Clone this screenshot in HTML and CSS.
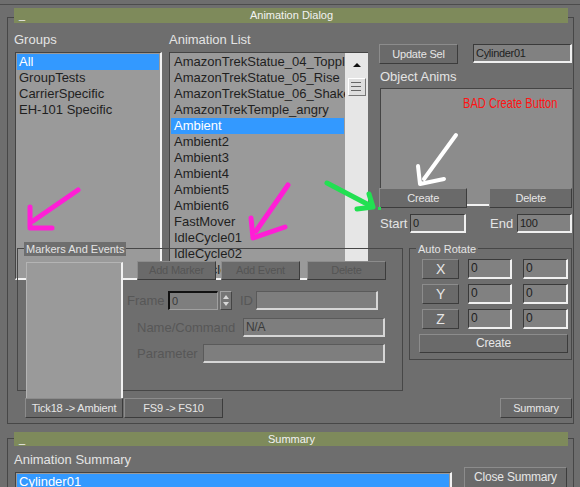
FILE: index.html
```html
<!doctype html>
<html>
<head>
    <title>Animation Dialog</title>
    <link rel="stylesheet" href="styles.css">
</head>
<body>
<div class="window">
    <div class="panel">
        <div class="rollout main-rollout">
            <div class="rollout-head"><span class="collapse">_</span><span class="head-title">Animation Dialog</span></div>
            <div class="rollout-body">
                <div class="top-row">
                    <div class="col-groups">
                        <div class="label">Groups</div>
                        <ul class="list groups-list">
                            <li class="sel">All</li>
                            <li>GroupTests</li>
                            <li>CarrierSpecific</li>
                            <li>EH-101 Specific</li>
                        </ul>
                    </div>
                    <div class="col-anims">
                        <div class="label">Animation List</div>
                        <div class="list anim-list">
                            <ul class="anim-rows">
                                <li>AmazonTrekStatue_04_Topple</li>
                                <li>AmazonTrekStatue_05_Rise</li>
                                <li>AmazonTrekStatue_06_Shake</li>
                                <li>AmazonTrekTemple_angry</li>
                                <li class="sel">Ambient</li>
                                <li>Ambient2</li>
                                <li>Ambient3</li>
                                <li>Ambient4</li>
                                <li>Ambient5</li>
                                <li>Ambient6</li>
                                <li>FastMover</li>
                                <li>IdleCycle01</li>
                                <li>IdleCycle02</li>
                                <li>IdleCycle03</li>
                                <li>IdleCycle04</li>
                            </ul>
                            <div class="scrollbar"><span class="arrow-up"></span><span class="thumb"></span></div>
                        </div>
                    </div>
                    <div class="col-object">
                        <div class="sel-row">
                            <div class="btn btn-update">Update Sel</div>
                            <div class="field name-field">Cylinder01</div>
                        </div>
                        <div class="label obj-label">Object Anims</div>
                        <div class="obj-list"><span class="bad">BAD Create Button</span></div>
                        <div class="obj-buttons">
                            <div class="btn btn-create">Create</div>
                            <div class="btn btn-delete">Delete</div>
                        </div>
                        <div class="range-row">
                            <span class="range-label start-label">Start</span>
                            <div class="field start-field">0</div>
                            <span class="range-label end-label">End</span>
                            <div class="field end-field">100</div>
                        </div>
                    </div>
                </div>
                <div class="mid-row">
                    <div class="group markers">
                        <div class="group-title">Markers And Events</div>
                        <div class="markers-body">
                            <div class="mk-list"></div>
                            <div class="mk-form">
                                <div class="mk-buttons">
                                    <div class="btn off mk-btn">Add Marker</div>
                                    <div class="btn off mk-btn add-event">Add Event</div>
                                    <div class="btn off mk-btn mk-delete">Delete</div>
                                </div>
                                <div class="frame-row">
                                    <span class="off-label frame-label">Frame</span>
                                    <div class="field off-field frame-field">0</div>
                                    <div class="spin"><i class="spin-up"></i><i class="spin-down"></i></div>
                                    <span class="off-label id-label">ID</span>
                                    <div class="field off-field id-field"></div>
                                </div>
                                <div class="form-row name-row">
                                    <span class="off-label name-label">Name/Command</span>
                                    <div class="field off-field name-cmd">N/A</div>
                                </div>
                                <div class="form-row param-row">
                                    <span class="off-label param-label">Parameter</span>
                                    <div class="field off-field param-field"></div>
                                </div>
                            </div>
                        </div>
                    </div>
                    <div class="group autorot">
                        <div class="group-title">Auto Rotate</div>
                        <div class="ar-row first">
                            <div class="btn axis">X</div>
                            <div class="field ar-a">0</div>
                            <div class="field ar-b">0</div>
                        </div>
                        <div class="ar-row">
                            <div class="btn axis">Y</div>
                            <div class="field ar-a">0</div>
                            <div class="field ar-b">0</div>
                        </div>
                        <div class="ar-row">
                            <div class="btn axis">Z</div>
                            <div class="field ar-a">0</div>
                            <div class="field ar-b">0</div>
                        </div>
                        <div class="btn ar-create">Create</div>
                    </div>
                </div>
                <div class="bottom-row">
                    <div class="btn btn-tick">Tick18 -&gt; Ambient</div>
                    <div class="btn btn-fs">FS9 -&gt; FS10</div>
                    <div class="btn btn-summary">Summary</div>
                </div>
            </div>
        </div>
        <div class="rollout summary-rollout">
            <div class="rollout-head small-head"><span class="collapse">_</span><span class="head-title">Summary</span></div>
            <div class="summary-body">
                <div class="label">Animation Summary</div>
                <div class="summary-row">
                    <ul class="list summary-list">
                        <li class="sel">Cylinder01</li>
                    </ul>
                    <div class="btn btn-close">Close Summary</div>
                </div>
            </div>
        </div>
    </div>
    <!-- hand drawn markup arrows over the dialog -->
    <svg class="marks" width="580" height="487" viewBox="0 0 580 487">
        <g fill="none" stroke-linecap="round" stroke-linejoin="round" stroke-width="5">
            <g stroke="#ff1ed6">
                <path d="M78 190 L33 221"/>
                <path d="M30 207 L30 228 L52 228"/>
                <path d="M288 185 L256 231"/>
                <path d="M251 218 L253 238 L285 227"/>
            </g>
            <g stroke="#ffffff" stroke-width="4">
                <path d="M456 135 L424 179"/>
                <path d="M418 166 L420 184 L444 179"/>
            </g>
            <g stroke="#22e052">
                <path d="M327 183 L369 205"/>
                <path d="M369 194 L373 207 L357 209"/>
            </g>
        </g>
        <rect x="378" y="207" width="3" height="3" fill="#22e052"/>
    </svg>
</div>
</body>
</html>
```

FILE: styles.css
```css
* {
    box-sizing: border-box;
}
html, body {
    margin: 0;
}
body {
    background: #6e6e6e;
    font-family: "Liberation Sans", Arial, sans-serif;
    font-size: 13px;
    color: #e4e4e4;
}
ul {
    margin: 0;
    padding: 0;
    list-style: none;
}
.window {
    position: relative;
    width: 580px;
    height: 487px;
    overflow: hidden;
    padding-top: 4px;
}
.panel {
    border-top: 1px solid #4c4c4c;
}

/* Rollouts */
.rollout {
    margin: 12px 0 0 7px;
    width: 567px;
    height: 407px;
    border: 1px solid #474747;
}
.rollout-head {
    display: flex;
    margin: -10px 0 0 6px;
    width: 554px;
    height: 15px;
    background: #7e8a5b;
    color: #f2f2f2;
    font-size: 11px;
    line-height: 15px;
}
.collapse {
    width: 0;
    margin-left: 5px;
}
.head-title {
    flex: 1;
    text-align: center;
    padding-right: 4px;
}
.rollout-body {
    padding: 9px 0 0 6px;
}
.label {
    height: 16px;
    line-height: 16px;
    white-space: nowrap;
}

/* Top row: groups, animation list, object anims */
.top-row {
    display: flex;
    align-items: flex-start;
    height: 216px;
}
.col-groups {
    width: 148px;
}
.list {
    margin-top: 4px;
    height: 228px;
    background: #9a9a9a;
    border-style: solid;
    border-width: 1px 2px 2px 1px;
    border-color: #444 #f2f2f2 #f2f2f2 #444;
    padding: 1px;
    color: #1f1f1f;
    overflow: hidden;
}
.list li {
    height: 16px;
    line-height: 16px;
    padding-left: 2px;
    white-space: nowrap;
}
.list li.sel {
    background: #3399ff;
    color: #fff;
}
.groups-list {
    margin-left: 1px;
}
.col-anims {
    width: 199px;
    margin-left: 7px;
}
.anim-list {
    display: flex;
    padding: 0;
    border-right-width: 0;
}
.anim-rows {
    flex: 1;
    padding: 1px;
    overflow: hidden;
}
.anim-rows li {
    padding-left: 3px;
}
.scrollbar {
    width: 23px;
    background: #e6e6e6;
    display: flex;
    flex-direction: column;
    align-items: center;
    padding-top: 10px;
}
.arrow-up {
    width: 0;
    height: 0;
    border-left: 4px solid transparent;
    border-right: 4px solid transparent;
    border-bottom: 4px solid #111;
}
.thumb {
    margin-top: 11px;
    width: 18px;
    height: 18px;
    border: 1px solid;
    border-color: #fff #777 #777 #fff;
    background:
        linear-gradient(#666, #666) 2px 3px / 10px 1px no-repeat,
        linear-gradient(#666, #666) 2px 7px / 10px 1px no-repeat,
        linear-gradient(#666, #666) 2px 11px / 10px 1px no-repeat,
        #dedede;
}
.col-object {
    width: 193px;
    margin-left: 11px;
}
.sel-row {
    display: flex;
    margin-top: 12px;
    height: 20px;
}
.btn-update {
    width: 79px;
}
.name-field {
    flex: 1;
    margin-left: 15px;
}
.obj-label {
    margin: 5px 0 0 1px;
}
.obj-list {
    margin: 3px 0 0 1px;
    height: 118px;
    background: #8c8c8c;
    border-style: solid;
    border-width: 1px 0 2px 1px;
    border-color: #444 transparent #f2f2f2 #444;
    padding: 6px 0 0 82px;
}
.bad {
    display: inline-block;
    color: #ff1414;
    font-family: "Liberation Sans Narrow", "Liberation Sans", sans-serif;
    font-size: 15px;
    line-height: 16px;
    white-space: nowrap;
    transform: scaleX(0.74);
    transform-origin: left center;
}
.obj-buttons {
    display: flex;
    margin-top: -18px;
}
.btn-create {
    width: 89px;
}
.btn-delete {
    width: 83px;
    margin-left: 22px;
}
.range-row {
    display: flex;
    align-items: center;
    margin-top: 6px;
    height: 19px;
}
.range-label {
    white-space: nowrap;
}
.start-label {
    width: 31px;
    padding-left: 1px;
}
.start-field {
    width: 56px;
}
.end-label {
    width: 27px;
    margin-left: 24px;
}
.end-field {
    flex: 1;
}

/* Buttons and fields */
.btn {
    height: 20px;
    background: #6a6a6a;
    border: 1px solid;
    border-color: #8c8c8c #3c3c3c #3c3c3c #8c8c8c;
    color: #e6e6e6;
    font-size: 11px;
    letter-spacing: -0.2px;
    line-height: 18px;
    text-align: center;
    white-space: nowrap;
}
.btn.off {
    color: #555;
}
.field {
    height: 19px;
    background: #818181;
    border-style: solid;
    border-width: 1px 2px 2px 1px;
    border-color: #3a3a3a #f0f0f0 #f0f0f0 #3a3a3a;
    color: #1e1e1e;
    font-size: 11px;
    letter-spacing: -0.3px;
    line-height: 16px;
    padding-left: 2px;
    white-space: nowrap;
    overflow: hidden;
}
.off-field {
    background: #7e7e7e;
    border-color: #5a5a5a #d6d6d6 #d6d6d6 #5a5a5a;
    color: #3a3a3a;
}
.off-label {
    color: #575757;
    white-space: nowrap;
}

/* Group boxes */
.mid-row {
    display: flex;
    align-items: flex-start;
}
.group {
    border: 1px solid #474747;
}
.group-title {
    display: table;
    margin: -7px 0 0 6px;
    padding: 0 2px;
    background: #6e6e6e;
    font-size: 11px;
    line-height: 14px;
}
.markers {
    position: relative;
    margin-left: 3px;
    width: 386px;
    height: 143px;
}
.markers-body {
    display: flex;
    align-items: flex-start;
}
.mk-list {
    margin: 6px 0 0 8px;
    width: 97px;
    height: 136px;
    background: #9a9a9a;
    border-style: solid;
    border-width: 1px 2px 0 1px;
    border-color: #b4b4b4 #f2f2f2 transparent #b4b4b4;
}
.mk-form {
    margin-left: 4px;
}
.mk-buttons {
    display: flex;
    margin: 5px 0 0 10px;
}
.mk-btn {
    width: 79px;
    height: 19px;
    line-height: 17px;
}
.add-event {
    margin-left: 5px;
}
.mk-delete {
    margin-left: 7px;
}
.frame-row {
    display: flex;
    align-items: center;
    margin-top: 11px;
    height: 19px;
}
.frame-label {
    width: 41px;
}
.frame-field {
    width: 50px;
    border-width: 2px 1px 1px 2px;
    border-color: #111 #a0a0a0 #a0a0a0 #111;
}
.spin {
    display: flex;
    flex-direction: column;
    align-items: center;
    justify-content: space-evenly;
    margin-left: 2px;
    width: 12px;
    height: 19px;
    background: #767676;
    border: 1px solid;
    border-color: #a2a2a2 #454545 #454545 #a2a2a2;
}
.spin-up, .spin-down {
    width: 0;
    height: 0;
    border-left: 3px solid transparent;
    border-right: 3px solid transparent;
}
.spin-up {
    border-bottom: 4px solid #d8d8d8;
}
.spin-down {
    border-top: 4px solid #d8d8d8;
}
.id-label {
    width: 16px;
    margin-left: 8px;
}
.id-field {
    width: 122px;
}
.form-row {
    display: flex;
    align-items: center;
    margin-left: 10px;
    height: 19px;
}
.name-row {
    margin-top: 8px;
}
.name-label {
    width: 106px;
}
.name-cmd {
    width: 142px;
    font-size: 12px;
}
.param-row {
    margin-top: 7px;
}
.param-label {
    width: 66px;
}
.param-field {
    width: 182px;
}
.autorot {
    margin-left: 6px;
    width: 163px;
    height: 112px;
}
.ar-row {
    display: flex;
    margin: 5px 0 0 12px;
    height: 20px;
}
.ar-row.first {
    margin-top: 3px;
}
.axis {
    width: 37px;
    font-size: 14px;
}
.ar-row .field {
    height: 20px;
    font-size: 12px;
}
.ar-a {
    width: 44px;
    margin-left: 9px;
}
.ar-b {
    width: 45px;
    margin-left: 11px;
}
.ar-create {
    margin: 5px 0 0 9px;
    width: 149px;
    height: 19px;
    font-size: 12px;
    line-height: 17px;
}

/* Bottom buttons */
.bottom-row {
    display: flex;
    margin-top: 7px;
}
.btn-tick {
    width: 98px;
    margin-left: 11px;
}
.btn-fs {
    width: 99px;
    margin-left: 1px;
}
.btn-summary {
    width: 72px;
    margin-left: auto;
    margin-right: 1px;
}

/* Summary rollout */
.summary-rollout {
    margin-top: 14px;
    height: 60px;
    border-bottom: none;
}
.small-head {
    margin-top: -7px;
    height: 14px;
    line-height: 14px;
}
.summary-body {
    padding: 6px 0 0 6px;
}
.summary-row {
    display: flex;
    align-items: flex-start;
}
.summary-list {
    margin: 4px 0 0 1px;
    width: 437px;
    height: 40px;
}
.btn-close {
    margin: -1px 0 0 12px;
    width: 103px;
    height: 21px;
    font-size: 12px;
}

.marks {
    position: absolute;
    left: 0;
    top: 0;
    pointer-events: none;
}
```
